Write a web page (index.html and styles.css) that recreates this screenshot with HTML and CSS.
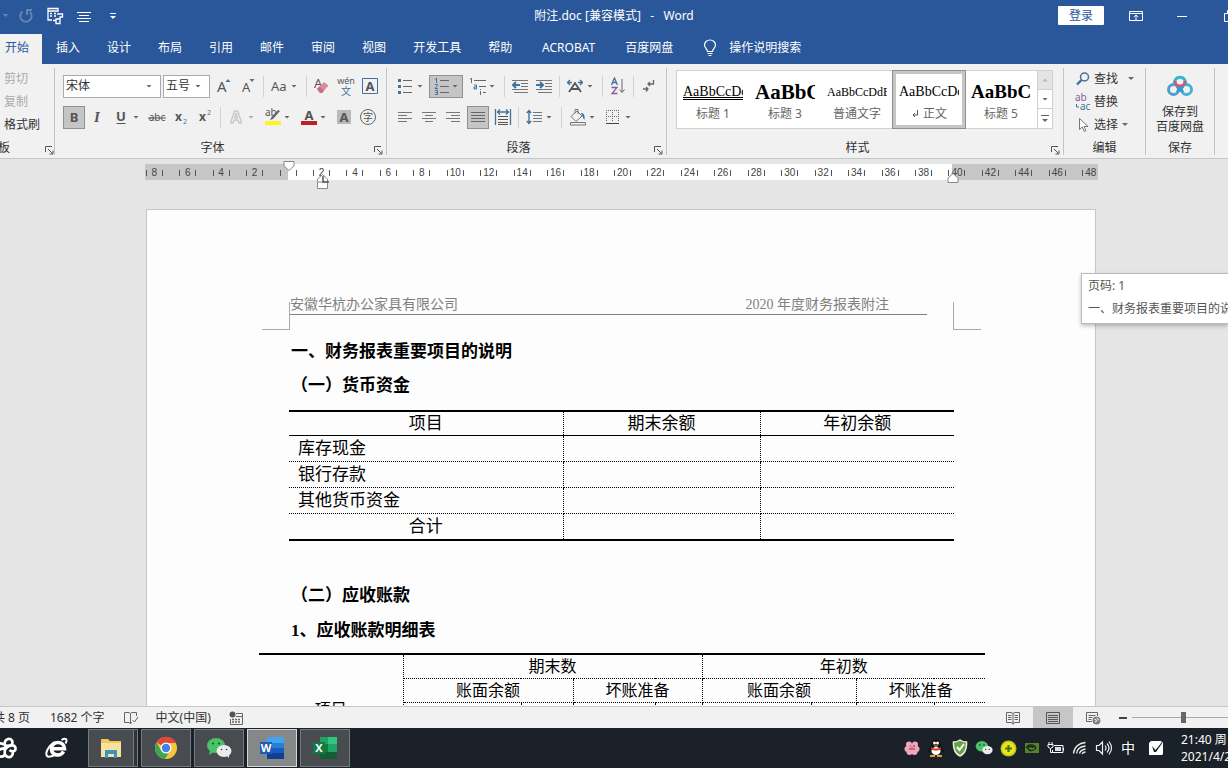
FILE: index.html
```html
<!DOCTYPE html>
<html lang="zh-CN">
<head>
<meta charset="utf-8">
<title>附注.doc [兼容模式] - Word</title>
<link rel="stylesheet" href="styles.css">
</head>
<body>
<header class="titlebar">
  <div class="quick">
    <button class="quick-btn quick-first dim" aria-label="撤消选项"><i class="caret"></i></button>
    <button class="quick-btn dim" aria-label="重复"><svg width="16" height="16" viewBox="0 0 16 16" fill="none" stroke="currentColor" stroke-width="2"><path d="M4.500 3.500A5.700 5.700 0 1 0 12 4M14 2H9v5"/></svg></button>
    <button class="quick-btn" aria-label="格式"><svg width="18" height="18" viewBox="0 0 18 18" fill="none" stroke="currentColor" stroke-width="1.300"><path d="M6 13H2V1.500h10V5M2 4h10M4 6.500h2M8 6.500h2M4 9h2M8 9h2M7 13.500h3M11 7h5.500v3H14v6.500h-4V12h4"/></svg></button>
    <button class="quick-btn" aria-label="居中"><svg width="16" height="16" viewBox="0 0 16 16" stroke="currentColor"><path d="M1 4.500h14M3 7.500h10M1 10.500h14M3 13.500h10"/></svg></button>
    <button class="quick-btn" aria-label="自定义快速访问工具栏"><svg width="8" height="8" viewBox="0 0 8 8"><path d="M1 1.500h6" stroke="currentColor"/><path d="M1 4h6L4 7z" fill="currentColor"/></svg></button>
  </div>
  <h1 class="doc-title">附注.doc [兼容模式]&nbsp;&nbsp; -&nbsp;&nbsp; Word</h1>
  <div class="window-tools">
    <button class="login">登录</button>
    <button class="win-btn" aria-label="功能区显示选项"><svg width="14" height="12" viewBox="0 0 14 12" fill="none" stroke="currentColor"><path d="M.5 1.500h13v9H.5zM.5 3.500h13M7 10V5M4.800 7 7 5l2.200 2"/></svg></button>
    <button class="win-btn" aria-label="最小化"><svg width="12" height="12" viewBox="0 0 12 12" stroke="currentColor"><path d="M1 6.500h10"/></svg></button>
    <button class="win-btn win-last" aria-label="还原"><svg width="12" height="12" viewBox="0 0 12 12" fill="none" stroke="currentColor"><path d="M.5 3.500h8v8h-8zM3.500 3V.5h8v8H9"/></svg></button>
  </div>
</header>
<nav class="tabs">
  <button class="tab tab-active">开始</button>
  <button class="tab">插入</button>
  <button class="tab">设计</button>
  <button class="tab">布局</button>
  <button class="tab">引用</button>
  <button class="tab">邮件</button>
  <button class="tab">审阅</button>
  <button class="tab">视图</button>
  <button class="tab">开发工具</button>
  <button class="tab">帮助</button>
  <button class="tab tab-latin">ACROBAT</button>
  <button class="tab">百度网盘</button>
  <button class="tab tell-me"><svg width="14" height="18" viewBox="0 0 14 18" fill="none" stroke="currentColor" stroke-width="1.200"><path d="M4.500 12.500C4.500 10 1.500 9 1.500 6a5.500 5 0 0 1 11 0c0 3-3 4-3 6.500zM4.500 14.500h5M5.500 16.500h3"/></svg>操作说明搜索</button>
</nav>

<section class="ribbon">
  <div class="group clipboard">
    <div class="group-body stack">
      <button class="line-btn dim-text">剪切</button>
      <button class="line-btn dim-text">复制</button>
      <button class="line-btn">格式刷</button>
    </div>
    <div class="group-label"><span class="clip-name">剪贴板</span><button class="launcher" aria-label="剪贴板设置"><svg width="9" height="9" viewBox="0 0 9 9" fill="none" stroke="#555"><path d="M.5 6V.5H7M3 3l4.500 4.500M8 4.500V8H4.500"/></svg></button></div>
  </div>

  <div class="group font-group">
    <div class="group-body rows">
      <div class="row">
        <label class="combo combo-wide"><select aria-label="字体"><option>宋体</option></select><i class="caret"></i></label>
        <label class="combo combo-size"><select aria-label="字号"><option>五号</option></select><i class="caret"></i></label>
        <button class="btn" aria-label="增大字号"><svg width="18" height="18" viewBox="0 0 18 18"><text x="2" y="15" class="ic ic16">A</text><path d="M10.500 5h5L13 2z" fill="#4a7192"/></svg></button>
        <button class="btn" aria-label="减小字号"><svg width="18" height="18" viewBox="0 0 18 18"><text x="3" y="15" class="ic ic13">A</text><path d="M10.500 2h5L13 5z" fill="#4a7192"/></svg></button>
        <i class="sep"></i>
        <button class="drop" aria-label="更改大小写"><svg width="18" height="18" viewBox="0 0 18 18"><text x="0" y="14" class="ic ic13">Aa</text></svg><i class="caret"></i></button>
        <i class="sep"></i>
        <button class="btn" aria-label="清除格式"><svg width="18" height="18" viewBox="0 0 18 18"><text x="1" y="11" class="ic ic13">A</text><path d="m4 12 7-7 4.500 3.500L9 16H7z" fill="#e08a9b"/><path d="m4 12 2.500-2.500 4.500 4L9 16H7z" fill="#cc6c82"/></svg></button>
        <button class="btn" aria-label="拼音指南"><svg width="18" height="20" viewBox="0 0 18 20"><text x="9" y="8" text-anchor="middle" class="ic ic9">wén</text><text x="9" y="19" text-anchor="middle" class="ic ic10 blue">文</text></svg></button>
        <button class="btn" aria-label="字符边框"><svg width="18" height="18" viewBox="0 0 18 18"><path d="M1.500 1.500h15v15h-15z" fill="none" stroke="#41719c"/><text x="9" y="14" text-anchor="middle" class="ic ic13 bold">A</text></svg></button>
      </div>
      <div class="row">
        <button class="btn pressed" aria-label="加粗"><svg width="16" height="18" viewBox="0 0 16 18"><text x="8" y="14" text-anchor="middle" class="ic ic13 bold">B</text></svg></button>
        <button class="btn" aria-label="倾斜"><svg width="16" height="18" viewBox="0 0 16 18"><text x="8" y="14" text-anchor="middle" class="ic bold serif italic">I</text></svg></button>
        <button class="drop" aria-label="下划线"><svg width="16" height="18" viewBox="0 0 16 18"><text x="8" y="13" text-anchor="middle" class="ic ic13 bold">U</text><path d="M3.500 15.500h9" stroke="#555"/></svg><i class="caret"></i></button>
        <button class="btn" aria-label="删除线"><svg width="18" height="18" viewBox="0 0 18 18"><text x="9" y="13" text-anchor="middle" class="ic ic10">abc</text><path d="M0 10h18" stroke="#555"/></svg></button>
        <button class="btn" aria-label="下标"><svg width="16" height="18" viewBox="0 0 16 18"><text x="2" y="13" class="ic ic12 bold">x</text><text x="10" y="16" class="ic ic7 blue">2</text></svg></button>
        <button class="btn" aria-label="上标"><svg width="16" height="18" viewBox="0 0 16 18"><text x="2" y="13" class="ic ic12 bold">x</text><text x="10" y="7" class="ic ic7 blue">2</text></svg></button>
        <i class="sep"></i>
        <button class="drop faint" aria-label="文本效果"><svg width="16" height="18" viewBox="0 0 16 18"><text x="8" y="15" text-anchor="middle" class="outline">A</text></svg><i class="caret"></i></button>
        <button class="drop" aria-label="突出显示"><svg width="18" height="20" viewBox="0 0 18 20"><text x="1" y="9" class="ic ic10">ab</text><path d="m16 4-7 8-3 1 1.500-3L14 3z" fill="#666"/><path d="M1 14h16v4H1z" fill="#fbf522"/></svg><i class="caret"></i></button>
        <button class="drop" aria-label="字体颜色"><svg width="18" height="20" viewBox="0 0 18 20"><text x="9" y="13" text-anchor="middle" class="ic ic13 bold">A</text><path d="M1 14h16v4H1z" fill="#c01f25"/></svg><i class="caret"></i></button>
        <button class="btn" aria-label="字符底纹"><svg width="16" height="16" viewBox="0 0 16 16"><path d="M1 1h14v14H1z" fill="#b9b9b9"/><text x="8" y="13" text-anchor="middle" class="ic ic13 bold">A</text></svg></button>
        <button class="btn" aria-label="带圈字符"><svg width="18" height="18" viewBox="0 0 18 18"><circle cx="9" cy="9" r="7.500" fill="none" stroke="#666"/><text x="9" y="13" text-anchor="middle" class="ic ic10">字</text></svg></button>
      </div>
    </div>
    <div class="group-label"><span>字体</span><button class="launcher" aria-label="字体设置"><svg width="9" height="9" viewBox="0 0 9 9" fill="none" stroke="#555"><path d="M.5 6V.5H7M3 3l4.500 4.500M8 4.500V8H4.500"/></svg></button></div>
  </div>

  <div class="group para-group">
    <div class="group-body rows">
      <div class="row">
        <button class="drop" aria-label="项目符号"><svg width="16" height="16" viewBox="0 0 16 16"><path d="M6 2.500h9M6 8.500h9M6 14.500h9" stroke="#666"/><path d="M1 1h3v3H1zM1 7h3v3H1zM1 13h3v3H1z" fill="#4a7192"/></svg><i class="caret"></i></button>
        <button class="drop pressed" aria-label="编号"><svg width="16" height="18" viewBox="0 0 16 18"><path d="M6 3.500h9M6 9.500h9M6 15.500h9" stroke="#666"/><path d="M1 2.500 2.500 1v5M1 7.500h2.500v1L1 11.500h3M1 13.500h2.500v4H1M1.500 15.500h2" fill="none" stroke="#41719c"/></svg><i class="caret"></i></button>
        <button class="drop" aria-label="多级列表"><svg width="18" height="18" viewBox="0 0 18 18"><path d="M5 3.500h12M10 9.500h7M14 15.500h3" stroke="#666"/><path d="M1 2.500 2.500 1v5M5 8h2.500v4H5v-2h2M11.500 14v4M11.500 12v1" fill="none" stroke="#41719c"/></svg><i class="caret"></i></button>
        <i class="sep"></i>
        <button class="btn" aria-label="减少缩进量"><svg width="16" height="16" viewBox="0 0 16 16"><path d="M0 2.500h16M9 5.500h7M9 8.500h7M0 11.500h16M2 14.500h14" stroke="#777"/><path d="M1 7h7M4 4 1 7l3 3" fill="none" stroke="#41719c" stroke-width="2"/></svg></button>
        <button class="btn" aria-label="增加缩进量"><svg width="16" height="16" viewBox="0 0 16 16"><path d="M0 2.500h16M9 5.500h7M9 8.500h7M0 11.500h16M2 14.500h14" stroke="#777"/><path d="M0 7h7M4 4l3 3-3 3" fill="none" stroke="#41719c" stroke-width="2"/></svg></button>
        <i class="sep"></i>
        <button class="drop" aria-label="中文版式"><svg width="16" height="16" viewBox="0 0 16 16" fill="none"><path d="m2 14 6-9 6 9M4.500 11h7" stroke="#555" stroke-width="1.800"/><path d="M0 4.500h5M3 2 .5 4.500 3 7M11 4.500h5M13 2l2.500 2.500L13 7" stroke="#41719c" stroke-width="1.300"/></svg><i class="caret"></i></button>
        <i class="sep"></i>
        <button class="btn" aria-label="排序"><svg width="16" height="18" viewBox="0 0 16 18"><path d="m1.500 8 3-7 3 7M2.500 5.500h4" fill="none" stroke="#41719c" stroke-width="1.300"/><path d="M1.500 10.500H7l-5 6h5.500" fill="none" stroke="#8a5a9c" stroke-width="1.300"/><path d="M12 2v13M9.500 12.500 12 15.500l2.500-3" fill="none" stroke="#666"/></svg></button>
        <i class="sep"></i>
        <button class="btn" aria-label="显示编辑标记"><svg width="16" height="16" viewBox="0 0 16 16" fill="none" stroke="#666" stroke-width="1.300"><path d="M12.500 2v4H7M9 4 7 6l2 2M2 11h5M5 9l2 2-2 2.500"/></svg></button>
      </div>
      <div class="row">
        <button class="btn" aria-label="左对齐"><svg width="16" height="16" viewBox="0 0 16 16"><path d="M1 3.500h14M1 6.500h9M1 9.500h14M1 12.500h9" stroke="#777"/></svg></button>
        <button class="btn" aria-label="居中对齐"><svg width="16" height="16" viewBox="0 0 16 16"><path d="M1 3.500h14M4 6.500h8M1 9.500h14M4 12.500h8" stroke="#777"/></svg></button>
        <button class="btn" aria-label="右对齐"><svg width="16" height="16" viewBox="0 0 16 16"><path d="M1 3.500h14M6 6.500h9M1 9.500h14M6 12.500h9" stroke="#777"/></svg></button>
        <button class="btn pressed justify" aria-label="两端对齐"><svg width="16" height="16" viewBox="0 0 16 16"><path d="M1 3.500h14M1 6.500h14M1 9.500h14M1 12.500h14" stroke="#666"/></svg></button>
        <button class="btn" aria-label="分散对齐"><svg width="18" height="18" viewBox="0 0 18 18"><path d="M1.500 1v16M16.500 1v16M4 4h10M6 1.500 3.500 4 6 6.500M12 1.500 14.500 4 12 6.500" fill="none" stroke="#41719c" stroke-width="1.300"/><path d="M4 8.500h10M4 11.500h10M4 14.500h10M4 16.500h10" stroke="#555"/></svg></button>
        <i class="sep"></i>
        <button class="drop" aria-label="行距"><svg width="16" height="16" viewBox="0 0 16 16"><path d="M7 3.500h9M7 6.500h9M7 9.500h9M7 12.500h9" stroke="#777"/><path d="M3 1.500v13M.8 4 3 1.500 5.200 4M.8 12 3 14.500 5.200 12" fill="none" stroke="#41719c" stroke-width="1.400"/></svg><i class="caret"></i></button>
        <i class="sep"></i>
        <button class="drop" aria-label="底纹"><svg width="18" height="18" viewBox="0 0 18 18" fill="none" stroke="#777"><path d="M2 8.500 8 3l5 5-6 5.500zM6 5V1.500h3V6"/><path d="M12 5c3 0 4 2 3.500 7-1-1-2-3-2-4" fill="#41719c" stroke="none"/><path d="M1.500 14.500h15v2.500h-15z"/></svg><i class="caret"></i></button>
        <button class="drop" aria-label="边框"><svg width="16" height="16" viewBox="0 0 16 16" fill="none" stroke="#666"><path d="M1.500 1v12M13.500 1v12M7.500 1v12M1 1.500h13M1 7.500h13" stroke-dasharray="1 1"/><path d="M1 14.500h13" stroke="#444"/></svg><i class="caret"></i></button>
      </div>
    </div>
    <div class="group-label"><span>段落</span><button class="launcher" aria-label="段落设置"><svg width="9" height="9" viewBox="0 0 9 9" fill="none" stroke="#555"><path d="M.5 6V.5H7M3 3l4.500 4.500M8 4.500V8H4.500"/></svg></button></div>
  </div>

  <div class="group style-group">
    <div class="group-body">
      <div class="gallery">
        <button class="style-card"><span class="sample underlined">AaBbCcDd</span><span class="style-name">标题 1</span></button>
        <button class="style-card"><span class="sample huge">AaBbC</span><span class="style-name">标题 3</span></button>
        <button class="style-card"><span class="sample small">AaBbCcDdE</span><span class="style-name">普通文字</span></button>
        <button class="style-card chosen"><span class="sample">AaBbCcDd</span><span class="style-name"><svg width="8" height="8" viewBox="0 0 8 8" fill="none" stroke="#555"><path d="M6.500 0v5H2M4 3 2 5l2 2"/></svg> 正文</span></button>
        <button class="style-card"><span class="sample large">AaBbC</span><span class="style-name">标题 5</span></button>
        <div class="gallery-scroll">
          <button class="scroll-off" aria-label="上一行"><i class="caret up"></i></button>
          <button aria-label="下一行"><i class="caret"></i></button>
          <button aria-label="其他样式"><svg width="8" height="8" viewBox="0 0 8 8"><path d="M0 .5h8" stroke="#666"/><path d="M1 4h6L4 7z" fill="#666"/></svg></button>
        </div>
      </div>
    </div>
    <div class="group-label"><span>样式</span><button class="launcher" aria-label="样式设置"><svg width="9" height="9" viewBox="0 0 9 9" fill="none" stroke="#555"><path d="M.5 6V.5H7M3 3l4.500 4.500M8 4.500V8H4.500"/></svg></button></div>
  </div>

  <div class="group edit-group">
    <div class="group-body stack">
      <button class="line-btn"><svg width="16" height="16" viewBox="0 0 16 16" fill="none" stroke="#41719c"><circle cx="9.500" cy="6" r="4" stroke-width="1.500"/><path d="m6.500 9-4.500 4.500" stroke-width="2.400"/></svg>查找<i class="caret far"></i></button>
      <button class="line-btn"><svg width="16" height="18" viewBox="0 0 16 18"><text x="0" y="8" class="ic ic10 purple">ab</text><text x="5" y="17" class="ic ic10 blue">ac</text><path d="M1.500 11v3H4" fill="none" stroke="#41719c"/></svg>替换</button>
      <button class="line-btn"><svg width="16" height="16" viewBox="0 0 16 16" fill="#fff" stroke="#777"><path d="M4.500 1.500v11l2.800-2.500 2 4.500 1.700-.8-2-4.200H13z"/></svg>选择<i class="caret near"></i></button>
    </div>
    <div class="group-label"><span>编辑</span></div>
  </div>

  <div class="group save-group">
    <div class="group-body">
      <button class="save-btn"><svg width="28" height="24" viewBox="0 0 28 24" fill="none" stroke-width="3"><circle cx="7.500" cy="15.500" r="5" stroke="#4f9ed0"/><circle cx="20.500" cy="15.500" r="5" stroke="#45b4d4"/><path d="M9 11a5.500 5.500 0 1 1 10 0" stroke="#35b6ca"/><path d="M9 7a5 5 0 0 0 10 0" stroke="#de526c"/><path d="M11 12.500 17 18M17 12.500 11 18" stroke="#3b98cd"/></svg><span>保存到<br>百度网盘</span></button>
    </div>
    <div class="group-label"><span>保存</span></div>
  </div>
</section>

<main class="workspace">
  <div class="ruler">
    <div class="ruler-strip">
      <div class="ruler-scale">
        <span><b>8</b></span><span><b>6</b></span><span><b>4</b></span><span><b>2</b></span><span><b></b></span><span><b>2</b></span><span><b>4</b></span><span><b>6</b></span><span><b>8</b></span><span><b>10</b></span><span><b>12</b></span><span><b>14</b></span><span><b>16</b></span><span><b>18</b></span><span><b>20</b></span><span><b>22</b></span><span><b>24</b></span><span><b>26</b></span><span><b>28</b></span><span><b>30</b></span><span><b>32</b></span><span><b>34</b></span><span><b>36</b></span><span><b>38</b></span><span><b>40</b></span><span><b>42</b></span><span><b>44</b></span><span><b>46</b></span><span><b>48</b></span>
      </div>
    </div>
    <svg class="mark mark-first" width="12" height="11" viewBox="0 0 12 11"><path d="M1 .5h10v4.500L6 9.500 1 5z" fill="#fff" stroke="#888"/></svg>
    <svg class="mark mark-left" width="14" height="16" viewBox="0 0 14 16"><path d="M1.500 7.500V5l5-4.500 5 4.500v9.500h-10zM1.500 8h10" fill="#fff" stroke="#888"/><path d="M7 2v6h6" fill="none" stroke="#555" stroke-width="1.500"/></svg>
    <svg class="mark mark-right" width="12" height="11" viewBox="0 0 12 11"><path d="M1 9.500V5l5-4.500L11 5v4.500z" fill="#fff" stroke="#888"/></svg>
  </div>

  <article class="paper">
    <div class="page-head">
      <i class="crop crop-left"></i>
      <div class="head-text"><span>安徽华杭办公家具有限公司</span><span>2020 年度财务报表附注</span></div>
      <i class="crop crop-right"></i>
    </div>
    <h2 class="h-main">一、财务报表重要项目的说明</h2>
    <h3 class="h-sub">（一）货币资金</h3>
    <table class="cash">
      <colgroup><col class="c-item"><col class="c-end"><col class="c-start"></colgroup>
      <thead><tr><th>项目</th><th>期末余额</th><th>年初余额</th></tr></thead>
      <tbody>
        <tr><td>库存现金</td><td></td><td></td></tr>
        <tr><td>银行存款</td><td></td><td></td></tr>
        <tr><td>其他货币资金</td><td></td><td></td></tr>
        <tr><td class="total">合计</td><td></td><td></td></tr>
      </tbody>
    </table>
    <h3 class="h-second">（二）应收账款</h3>
    <h4 class="h-detail">1、应收账款明细表</h4>
    <table class="receivable">
      <colgroup><col class="r1"><col class="r2"><col class="r3"><col class="r4"><col class="r5"><col class="r6"><col class="r7"><col class="r8"><col class="r9"></colgroup>
      <tr><th rowspan="3" class="item">项目</th><th colspan="4">期末数</th><th colspan="4">年初数</th></tr>
      <tr><th colspan="2">账面余额</th><th colspan="2">坏账准备</th><th colspan="2">账面余额</th><th colspan="2">坏账准备</th></tr>
      <tr class="tall"><th></th><th></th><th></th><th></th><th></th><th></th><th></th><th></th></tr>
    </table>
  </article>
  <aside class="page-tip"><p>页码: 1</p><p>一、财务报表重要项目的说明</p></aside>
</main>

<footer class="status">
  <span class="pages">共 8 页</span>
  <span class="words">1682 个字</span>
  <button class="status-btn" aria-label="校对"><svg width="16" height="14" viewBox="0 0 16 14" fill="none" stroke="#666"><path d="M7.500 12.500V2.500L6 1.500H1.500v10H6zM7.500 2.500 9 1.500h4.500V5M7.500 12.500 9 11.500M9.500 9l2 2 3.500-5"/></svg></button>
  <span class="lang">中文(中国)</span>
  <button class="status-btn" aria-label="宏录制"><svg width="14" height="14" viewBox="0 0 14 14"><circle cx="3.500" cy="3.500" r="3" fill="#555"/><path d="M7 2.500h6.500v11h-12V8M7 5.500h6" fill="none" stroke="#666"/><path d="M3 8.500h9M3 11h9" stroke="#666" stroke-width="1.500" stroke-dasharray="2 1"/></svg></button>
  <div class="views">
    <button class="view" aria-label="阅读视图"><svg width="14" height="14" viewBox="0 0 14 14" fill="none" stroke="#666"><path d="M.5 1.500H5l2 1 2-1h4.500v10H9l-2 1-2-1H.5zM7 2.500v11M2 4.500h3.500M2 6.500h3.500M2 8.500h3.500M8.500 4.500H12M8.500 6.500H12M8.500 8.500H12"/></svg></button>
    <button class="view view-on" aria-label="页面视图"><svg width="14" height="14" viewBox="0 0 14 14" fill="none" stroke="#555"><path d="M.5 1.500h13v11H.5zM2 4.500h10M2 6.500h10M2 8.500h10M2 10.500h10"/></svg></button>
    <button class="view" aria-label="Web 版式视图"><svg width="15" height="14" viewBox="0 0 15 14" fill="none" stroke="#666"><path d="M6 10.500H.5v-9h11V5M2.500 4.500h7M2.500 6.500h4M2.500 8.500h3"/><circle cx="10.500" cy="9.500" r="3.500" fill="#888"/><path d="m8.500 8 2 1-1 2.500M11 6.500l1 2 1.500.5" stroke="#eee"/></svg></button>
    <button class="zoom-out" aria-label="缩小"><svg width="8" height="8" viewBox="0 0 8 8"><path d="M0 4h8" stroke="#444" stroke-width="2"/></svg></button>
    <input class="zoom" type="range" min="0" max="100" value="54" aria-label="缩放">
  </div>
</footer>

<div class="taskbar">
  <button class="pin pin-first" aria-label="启动"><svg width="24" height="22" viewBox="0 0 24 22" fill="none" stroke="#fff" stroke-width="2.600"><path d="M13 11c-2-3-2-8 2-9s6 4 3 6-6 0-8-1-6-1-6 2 4 4 9 2z"/><path d="M13 11c3-3 9-4 9.500 0s-4 4-6 2M13 11c-2 3-2 8 2 9s6-4 4-6.500M13 11c-4 0-9 2-8 6s6 3 7 0"/></svg></button>
  <button class="pin pin-ie" aria-label="Internet Explorer"><svg width="24" height="24" viewBox="0 0 24 24" fill="none" stroke="#fff"><path d="M18.500 15.500c-3 5.500-12 4.500-12-3 0-8 13-8 13 .3H8" stroke-width="3.600"/><path d="M16.500 4c4-2.500 6.500-1 4 3.500M9.500 6C3 10 0 17.500 2 20c1.500 1.500 4.500.5 8-1" stroke-width="2"/></svg></button>
  <button class="task" aria-label="文件资源管理器"><svg width="22" height="20" viewBox="0 0 22 20"><path d="M1 1h7l2 2h11v16H1z" fill="#edc85b"/><path d="M1 5h20v14H1z" fill="#f9e29b"/><path d="M5 12h12v8h-3v-4H8v4H5z" fill="#3997bf"/></svg></button>
  <i class="stack-edge"></i>
  <button class="task" aria-label="Chrome"><svg width="24" height="24" viewBox="0 0 24 24"><circle cx="12" cy="12" r="11" fill="#f5c63c"/><path d="M12 12 2.500 6.500A11 11 0 0 1 22 7H12z" fill="#e0483c"/><path d="M2.500 6.500A11 11 0 0 0 11 23l5-8.500-8.500.5z" fill="#3ba457"/><circle cx="12" cy="12" r="5.500" fill="#fff"/><circle cx="12" cy="12" r="4.200" fill="#4380e8"/></svg></button>
  <button class="task" aria-label="微信"><svg width="26" height="22" viewBox="0 0 26 22"><ellipse cx="10" cy="8.500" rx="9" ry="7.500" fill="#48c464"/><path d="m4 13-1 5 5-3z" fill="#48c464"/><ellipse cx="18" cy="14" rx="7.500" ry="6" fill="#ececec"/><path d="m20 18 3 3v-4z" fill="#ececec"/><g fill="#335"><circle cx="7" cy="6.500" r="1"/><circle cx="13" cy="6.500" r="1"/><circle cx="15.500" cy="12.500" r=".8"/><circle cx="20.500" cy="12.500" r=".8"/></g></svg></button>
  <button class="task task-on" aria-label="Word"><svg width="26" height="22" viewBox="0 0 26 22"><path d="M8 0h17v6H8z" fill="#41a5ee"/><path d="M8 6h17v5H8z" fill="#2b7cd3"/><path d="M8 11h17v5H8z" fill="#185abd"/><path d="M8 16h17v6H8z" fill="#103f91"/><path d="M1 5h12v12H1z" fill="#1d5bb5"/><text x="7" y="15" text-anchor="middle" class="app">W</text></svg></button>
  <button class="task" aria-label="Excel"><svg width="26" height="22" viewBox="0 0 26 22"><path d="M8 0h8v7H8z" fill="#21a366"/><path d="M16 0h9v7h-9z" fill="#33c481"/><path d="M8 7h8v8H8z" fill="#107c41"/><path d="M16 7h9v8h-9z" fill="#21a366"/><path d="M8 15h17v7H8z" fill="#185c37"/><path d="M1 5h12v12H1z" fill="#107c41"/><text x="7" y="15" text-anchor="middle" class="app">X</text></svg></button>
  <div class="tray">
    <button class="tray-btn" aria-label="花"><svg width="16" height="16" viewBox="0 0 16 16"><g fill="#efa9b8"><circle cx="5" cy="4.500" r="3"/><circle cx="11" cy="4.500" r="3"/><circle cx="3.500" cy="9" r="3"/><circle cx="12.500" cy="9" r="3"/><circle cx="5.500" cy="12" r="3"/><circle cx="10.500" cy="12" r="3"/><circle cx="8" cy="8" r="4"/></g><path d="M6 6h1M9 6h2M5 9h2M9 9h2M8 7v3" stroke="#b34a62" stroke-width="1.300"/></svg></button>
    <button class="tray-btn" aria-label="QQ"><svg width="16" height="18" viewBox="0 0 16 18"><ellipse cx="8" cy="8" rx="5" ry="7.500" fill="#111"/><path d="m3 8-2 5M13 8l2 5" stroke="#111" stroke-width="2"/><ellipse cx="8" cy="12" rx="4.500" ry="4" fill="#fff"/><circle cx="6.500" cy="4" r="1.500" fill="#fff"/><circle cx="9.500" cy="4" r="1.500" fill="#fff"/><path d="M5 6.500h6L8 8z" fill="#f0a020"/><path d="M3 8c3 2 7 2 10 0v2c-3 2-7 2-10 0z" fill="#d8322d"/><path d="M2 16h5v2H2zM9 16h5v2H9z" fill="#e8a030"/></svg></button>
    <button class="tray-btn" aria-label="安全"><svg width="16" height="18" viewBox="0 0 16 18"><path d="M8 1c2 1.500 4 2 6.500 2C15 10 13 14.500 8 17 3 14.500 1 10 1.500 3 4 3 6 2.500 8 1z" fill="#6a9f4b" stroke="#e8efe0" stroke-width="1.500"/><path d="m5 8 2.500 3L12 5" fill="none" stroke="#fff" stroke-width="2"/></svg></button>
    <button class="tray-btn" aria-label="微信消息"><svg width="18" height="16" viewBox="0 0 26 22"><ellipse cx="10" cy="8.500" rx="9" ry="7.500" fill="#48c464"/><ellipse cx="18" cy="14" rx="7.500" ry="6" fill="#ececec"/><g fill="#335"><circle cx="7" cy="6.500" r="1.200"/><circle cx="13" cy="6.500" r="1.200"/><circle cx="15.500" cy="13" r="1"/><circle cx="20.500" cy="13" r="1"/></g></svg></button>
    <button class="tray-btn" aria-label="加速"><svg width="17" height="17" viewBox="0 0 17 17"><circle cx="8.500" cy="8.500" r="8" fill="#b5c91e"/><circle cx="8.500" cy="8.500" r="6.500" fill="#f4e11c"/><path d="M8.500 5v7M5 8.500h7" stroke="#3c7a18" stroke-width="2.200"/></svg></button>
    <button class="tray-btn" aria-label="显卡"><svg width="16" height="12" viewBox="0 0 16 12"><path d="M1 1h14v10H1z" fill="#56812a"/><path d="M2 6c2-4 8-4 10 0-2 3-7 4-8 0 1-2 5-2 5 0" fill="none" stroke="#1a2818" stroke-width="1.300"/></svg></button>
    <button class="tray-btn" aria-label="电源"><svg width="18" height="14" viewBox="0 0 18 14" fill="none" stroke="#fff"><path d="M7 4.500h9v7H5.500V9M16.500 7v2.500M2 1v2.500M5 1v2.500M1 3.500h5V6L3.500 7.500 1 6zM3.500 7.500v4h2"/><path d="M8 6h6v4H8z" fill="#ddd" stroke="none"/></svg></button>
    <button class="tray-btn" aria-label="无线网络"><svg width="16" height="14" viewBox="0 0 16 14" fill="none" stroke="#eee" stroke-width="1.300"><path d="M1.500 12.500C2 6 7 2 13.500 1.500M4.500 12.500c.5-4 4-7 9-7.500M7.500 12.500c.5-2.500 3-4 6-4.500M10 13c.5-1 1.500-2 3.500-2"/></svg></button>
    <button class="tray-btn" aria-label="音量"><svg width="18" height="16" viewBox="0 0 18 16" fill="none" stroke="#eee" stroke-width="1.200"><path d="M1.500 5.500H4L7.500 2v12L4 10.500H1.500zM10 5.500q2 2.500 0 5M12 3.500q4 4.500 0 9M14 1.500q5 6.500 0 13"/></svg></button>
    <button class="tray-btn ime">中</button>
    <button class="tray-btn tray-pen" aria-label="手写"><svg width="14" height="14" viewBox="0 0 14 14"><path d="M2 0h10l2 2v11l-1 1H0V2z" fill="#fff"/><path d="m3 5 3.500 4L13 1v1.500L7 11H5z" fill="#1b2128"/></svg></button>
  </div>
  <time class="clock">21:40 周<br>2021/4/2</time>
</div>
</body>
</html>
```

FILE: styles.css
```css
* { box-sizing: border-box; }
body {
  margin: 0;
  height: 100vh;
  display: flex;
  flex-direction: column;
  overflow: hidden;
  background: #e5e5e5;
  color: #333;
  font: 12px/16px "Noto Sans", "Noto Sans CJK SC", sans-serif;
}
button, select, input { font: inherit; color: inherit; margin: 0; }
button { border: 0; padding: 0; background: none; white-space: nowrap; }
svg { display: block; flex: none; }
h1, h2, h3, h4, p { margin: 0; }

.caret {
  flex: none;
  width: 6px;
  height: 3px;
  background: #666;
  clip-path: polygon(0 0, 100% 0, 50% 100%);
}
.caret.up { clip-path: polygon(50% 0, 100% 100%, 0 100%); background: #bbb; }

/* Title bar */
.titlebar {
  flex: none;
  display: grid;
  grid-template-columns: 1fr auto 1fr;
  align-items: center;
  height: 34px;
  padding-bottom: 3px;
  background: #2a579a;
  color: #fff;
}
.quick { display: flex; align-items: center; }
.quick-btn { width: 29px; height: 24px; display: flex; align-items: center; justify-content: center; }
.quick-first { width: 11px; }
.quick-btn .caret { background: currentColor; }
.dim { color: #6484b4; }
.doc-title { font-size: 12px; font-weight: 400; }
.window-tools { display: flex; justify-content: flex-end; align-items: center; overflow: hidden; }
.login { width: 46px; height: 19px; margin-right: 9px; background: #fff; color: #2a579a; border-radius: 1px; }
.win-btn { width: 46px; height: 24px; display: flex; align-items: center; justify-content: center; flex: none; }
.win-last { width: 31px; justify-content: flex-end; margin-right: -8px; }

/* Tabs */
.tabs { flex: none; display: flex; gap: 1px; height: 30px; background: #2a579a; color: #fff; }
.tab { padding: 0 13px 2px; }
.tab-active { padding-left: 5px; background: #f1f1f1; color: #2a579a; }
.tab-latin { min-width: 85px; }
.tell-me { display: flex; align-items: center; gap: 12px; padding-left: 16px; }

/* Ribbon */
.ribbon {
  flex: none;
  display: flex;
  height: 95px;
  padding: 4px 0 3px;
  background: #f1f1f1;
  border-bottom: 1px solid #c6c6c6;
  overflow: hidden;
}
.group { flex: none; display: flex; flex-direction: column; border-right: 1px solid #c4c4c4; }
.group-body { flex: 1; }
.group-label { display: flex; align-items: center; height: 14px; line-height: 14px; }
.group-label span { flex: 1; text-align: center; }
.launcher { width: 16px; height: 14px; display: flex; align-items: flex-end; justify-content: center; }
.rows { display: flex; flex-direction: column; gap: 7px; padding-top: 6px; }
.row { display: flex; align-items: center; height: 24px; }
.btn { width: 24px; height: 24px; display: flex; align-items: center; justify-content: center; }
.drop { width: 34px; height: 24px; margin-right: 2px; display: flex; align-items: center; justify-content: space-between; padding: 0 4px; }
.pressed { background: #c5c5c5; border: 1px solid #919191; height: 23px; }
.btn.pressed { width: 22px; }
.btn.justify { margin: 0 2px; }
.sep { width: 1px; height: 21px; margin: 0 3px; background: #d2d2d2; }
.faint { opacity: .5; }
.combo { display: grid; grid-template-columns: 1fr 14px; align-items: center; height: 23px; background: #fff; border: 1px solid #ababab; }
.combo select { grid-area: 1 / 1 / 2 / 3; width: 100%; appearance: none; border: 0; background: none; padding: 0 2px; }
.combo .caret { grid-area: 1 / 2; }
.combo-wide { width: 98px; margin-right: 2px; }
.combo-size { width: 47px; margin-right: 2px; }

.ic { fill: #555; font-family: "Noto Sans", "Noto Sans CJK SC", sans-serif; }
.ic16 { font-size: 15px; }
.ic13 { font-size: 13px; }
.ic12 { font-size: 12px; }
.ic10 { font-size: 10px; }
.ic9 { font-size: 9px; }
.ic7 { font-size: 7px; }
.bold { font-weight: 700; }
.italic { font-style: italic; }
.serif { font-family: "Liberation Serif", serif; font-size: 15px; }
.blue { fill: #41719c; }
.purple { fill: #8a5a9c; }
.outline { font: 700 16px "Noto Sans", sans-serif; fill: #fff; stroke: #888; }

.clipboard { width: 55px; }
.stack { display: flex; flex-direction: column; gap: 2px; }
.line-btn { height: 21px; display: flex; align-items: center; gap: 3px; }
.clipboard .stack { padding-left: 4px; }
.clipboard .group-label { justify-content: flex-end; overflow: hidden; }
.clipboard .clip-name { flex: none; margin-right: 35px; }
.dim-text { color: #aaa; }
.font-group { padding-left: 8px; }
.font-group .rows { padding-right: 4px; }
.font-group .group-label, .style-group .group-label { margin-left: -8px; }
.para-group .rows { padding-left: 6px; padding-right: 5px; }

.style-group { padding-left: 9px; }
.style-group .group-body { padding: 2px 10px 0 0; }
.gallery { display: flex; height: 59px; background: #fff; border: 1px solid #d0d0d0; }
.style-card { width: 72px; padding: 0 6px; overflow: hidden; display: flex; flex-direction: column; text-align: left; }
.sample { width: 100%; height: 27px; margin-top: 8px; overflow: hidden; color: #000; font: 14px/26px "Liberation Serif", serif; }
.sample.small { font-size: 12px; }
.sample.large { font-size: 19px; font-weight: 700; }
.sample.huge { font-size: 21px; font-weight: 700; }
.sample.underlined { text-decoration: underline double; }
.style-name { width: 100%; display: flex; justify-content: center; align-items: center; gap: 4px; color: #666; }
.chosen { outline: 3px solid #c6c6c6; outline-offset: -3px; box-shadow: 0 0 0 1px #919191; }
.gallery-scroll { width: 15px; display: grid; grid-template-rows: 1fr 1fr 1fr; border-left: 1px solid #d0d0d0; }
.gallery-scroll button { display: flex; align-items: center; justify-content: center; border-bottom: 1px solid #d0d0d0; }
.gallery-scroll button:last-child { border-bottom: 0; }
.gallery-scroll .scroll-off { background: #e4e4e4; }
.edit-group { width: 82px; }
.edit-group .stack { padding-left: 11px; }
.far { margin-left: 7px; }
.near { margin-left: 1px; }
.save-group { width: 69px; }
.save-btn { width: 100%; padding-top: 6px; display: flex; flex-direction: column; align-items: center; gap: 6px; line-height: 15px; }

/* Workspace */
.workspace { flex: 1; min-height: 0; overflow: hidden; position: relative; padding: 5px 0 0 14px; }
.ruler { position: relative; width: 953px; margin: 0 auto 29px; }
.ruler-strip {
  display: flex;
  justify-content: center;
  overflow: hidden;
  height: 16px;
  padding-left: 3px;
  background: linear-gradient(90deg, #c6c6c6 143px, #fff 143px, #fff 807px, #c6c6c6 807px);
}
.ruler-scale { flex: none; width: 970px; display: grid; grid-template-columns: repeat(29, 1fr); }
.ruler-scale span {
  display: grid;
  grid-template-columns: 1px 15px 1px;
  justify-content: center;
  align-items: center;
}
.ruler-scale span::before, .ruler-scale span::after { content: ""; height: 6px; background: #555; }
.ruler-scale b { font: 10px/18px "Liberation Sans", sans-serif; text-align: center; color: #444; }
.mark { position: absolute; }
.mark-first { left: 138px; top: -3px; }
.mark-left { left: 171px; top: 10px; }
.mark-right { left: 802px; top: 9px; }

.paper {
  width: 950px;
  min-height: 1300px;
  margin: 0 auto;
  padding: 85px 141px 0 142px;
  background: #fdfdfd;
  border: 1px solid #c6c6c6;
  color: #000;
  font: 17px/24px "Liberation Serif", "Noto Sans CJK SC", serif;
}
.page-head { display: flex; align-items: flex-end; margin: 0 -27px; }
.crop { flex: none; width: 28px; height: 28px; border: 0 solid #aaa; border-bottom-width: 1px; }
.crop-left { border-right-width: 1px; }
.crop-right { border-left-width: 1px; }
.head-text {
  flex: 1;
  display: flex;
  justify-content: space-between;
  margin: 0 26px 15px 0;
  padding: 1px 38px 0 0;
  border-bottom: 1px solid #808080;
  color: #808080;
  font-size: 14px;
  line-height: 18px;
}
.h-main, .h-sub, .h-second, .h-detail { padding-left: 2px; font-size: 17px; font-weight: 700; }
.h-main { margin-top: 10px; }
.h-sub { margin-top: 10px; }
.h-second { margin-top: 43px; }
.h-detail { margin-top: 11px; }
table { border-collapse: collapse; table-layout: fixed; font-size: 16px; line-height: 23px; }
th { font-weight: 400; }
th, td { padding: 0; border: 1px dotted #000; }
tr > :last-child { border-right: 0; }
tr > :first-child { border-left: 0; }
.cash { width: 665px; margin-top: 12px; border-top: 2px solid #000; border-bottom: 2px solid #000; font-size: 17px; }
.cash tr { height: 26px; }
.cash thead tr { height: 24px; }
.cash th { border-bottom: 1px solid #000; }
.cash td:first-child { padding-left: 9px; }
.cash td.total:first-child { padding: 0; text-align: center; }
.c-item { width: 274px; }
.c-end { width: 197px; }
.c-start { width: 194px; }
.receivable { width: 726px; margin: 10px 0 0 -30px; border-top: 2px solid #000; }
.receivable tr > th { border-left: 1px dotted #000; }
.receivable .item { border-left: 0; vertical-align: top; padding-top: 43px; }
.receivable .tall { height: 48px; }
.r1 { width: 144px; }
.r2 { width: 118px; }
.r3 { width: 52px; }
.r4 { width: 82px; }
.r5 { width: 47px; }
.r6 { width: 109px; }
.r7 { width: 45px; }
.r8 { width: 78px; }
.r9 { width: 51px; }

.page-tip {
  position: absolute;
  right: 0;
  top: 114px;
  width: 147px;
  padding: 4px 0 6px 6px;
  overflow: hidden;
  white-space: nowrap;
  background: #fff;
  border: 1px solid #bbb;
  border-right: 0;
  box-shadow: 0 2px 4px rgba(0, 0, 0, .25);
  color: #555;
}
.page-tip p + p { margin-top: 7px; }

/* Status bar */
.status { flex: none; display: flex; align-items: center; height: 22px; background: #f1f1f1; border-top: 1px solid #c6c6c6; overflow: hidden; }
.pages { width: 30px; display: flex; justify-content: flex-end; white-space: nowrap; }
.words { margin: 0 18px 0 20px; }
.lang { margin: 0 18px 0 17px; }
.views { flex: 1; display: flex; justify-content: flex-end; align-items: center; }
.view { width: 40px; height: 21px; display: flex; align-items: center; justify-content: center; }
.view-on { background: #c6c6c6; }
.zoom-out { margin: 0 5px 0 6px; }
.zoom { width: 96px; height: 16px; appearance: none; background: none; }
.zoom::-webkit-slider-runnable-track { height: 11px; background: linear-gradient(#aaa, #aaa) center / 100% 1px no-repeat; }
.zoom::-webkit-slider-thumb { appearance: none; width: 5px; height: 11px; background: #666; }

/* Taskbar */
.taskbar { flex: none; display: flex; align-items: center; height: 40px; background: #1b2128; color: #fff; overflow: hidden; }
.pin-first { width: 17px; display: flex; justify-content: flex-end; }
.pin-ie { margin: 0 19px 0 28px; }
.task {
  width: 50px;
  height: 38px;
  margin-right: 3px;
  display: flex;
  align-items: center;
  justify-content: center;
  background: #484b4f;
  border: 1px solid #777a7d;
}
.pin-ie + .task { width: 46px; margin-right: 0; }
.stack-edge { width: 4px; height: 38px; margin-right: 3px; border: 1px solid #777a7d; border-left: 0; background: #303439; }
.task-on { background: #858789; border-color: #d5d5d5; }
.app { font: 700 11px "Open Sans", sans-serif; fill: #fff; }
.tray { margin-left: auto; display: flex; align-items: center; }
.tray-btn { width: 24px; height: 24px; display: flex; align-items: center; justify-content: center; }
.ime { font-size: 14px; }
.tray-pen { width: 32px; }
.clock { width: 47px; margin-left: 9px; white-space: nowrap; line-height: 17px; }
```
